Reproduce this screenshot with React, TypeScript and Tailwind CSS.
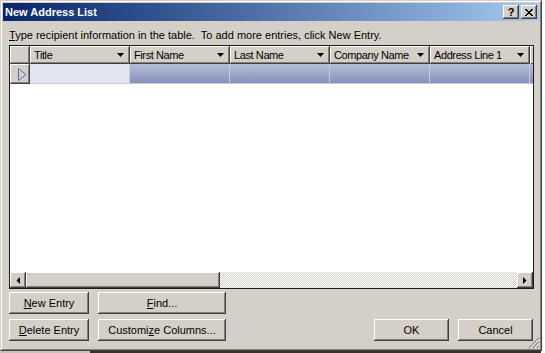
import React from "react";

function Arrow() {
  return (
    <svg width="7" height="4" viewBox="0 0 7 4" className="shrink-0">
      <path d="M0 0H7L3.5 4Z" fill="#000" />
    </svg>
  );
}

function HeaderCell({ label }: { label: string }) {
  return (
    <div className="w-[100px] h-full shrink-0 flex items-center justify-between pl-[4px] pr-[6px] bg-[#d4d0c8] shadow-[inset_-1px_-1px_#404040,inset_1px_1px_#ffffff,inset_-2px_-2px_#808080]">
      <span className="text-[11px] tracking-[-0.4px] text-black leading-none">{label}</span>
      <Arrow />
    </div>
  );
}

function Btn({ children, className }: { children: React.ReactNode; className: string }) {
  return (
    <div
      className={
        "h-[22px] flex items-center justify-center bg-[#d4d0c8] text-[11px] text-black leading-none shadow-[inset_-1px_-1px_#404040,inset_1px_1px_#ffffff,inset_-2px_-2px_#808080] " +
        className
      }
    >
      {children}
    </div>
  );
}

export default function App() {
  return (
    <div className="w-[545px] h-[353px] bg-white overflow-hidden font-['Liberation_Sans',Arial,sans-serif]">
      <div className="w-[542px] h-[351px] border border-t-[#d4d0c8] border-l-[#d4d0c8] border-r-[#404040] border-b-[#404040] bg-[#d4d0c8]">
        <div className="w-full h-full border border-t-white border-l-white border-r-[#808080] border-b-[#808080] p-[1px] flex flex-col relative">
          {/* Title bar */}
          <div className="h-[18px] shrink-0 flex items-center justify-between bg-linear-to-r from-[#0a246a] to-[#a6caf0] pl-[2px] pr-[2px]">
            <span className="text-[11px] font-bold text-white leading-none">New Address List</span>
            <div className="flex items-center">
              <div className="w-[16px] h-[14px] flex items-center justify-center bg-[#d4d0c8] shadow-[inset_-1px_-1px_#404040,inset_1px_1px_#ffffff,inset_-2px_-2px_#808080] text-[11px] font-bold text-black leading-none">
                ?
              </div>
              <div className="w-[16px] h-[14px] ml-[2px] flex items-center justify-center bg-[#d4d0c8] shadow-[inset_-1px_-1px_#404040,inset_1px_1px_#ffffff,inset_-2px_-2px_#808080]">
                <svg width="8" height="7" viewBox="0 0 8 7">
                  <path d="M0 0L7 7M1 0L8 7M7 0L0 7M8 0L1 7" stroke="#000" strokeWidth="1" />
                </svg>
              </div>
            </div>
          </div>

          {/* Content */}
          <div className="flex flex-col pl-[6px] pr-[6px]">
            <div className="mt-[8px] h-[13px] text-[11px] leading-[13px] text-black whitespace-pre">
              <span className="underline">T</span>ype recipient information in the table.  To add more entries, click New Entry.
            </div>

            {/* Table */}
            <div className="mt-[3px] w-[525px] h-[244px] border border-[#1c1c1c] bg-white flex flex-col">
              {/* Header */}
              <div className="h-[18px] flex shrink-0">
                <div className="w-[20px] h-full shrink-0 bg-[#d4d0c8] shadow-[inset_-1px_-1px_#404040,inset_1px_1px_#ffffff,inset_-2px_-2px_#808080]" />
                <HeaderCell label="Title" />
                <HeaderCell label="First Name" />
                <HeaderCell label="Last Name" />
                <HeaderCell label="Company Name" />
                <HeaderCell label="Address Line 1" />
                <div className="flex-1 h-full bg-[#d4d0c8] shadow-[inset_1px_1px_#ffffff,inset_0_-1px_#404040]" />
              </div>
              {/* Row */}
              <div className="h-[20px] flex shrink-0">
                <div className="w-[20px] h-full shrink-0 flex items-center justify-center bg-[#d4d0c8] shadow-[inset_-1px_-1px_#404040,inset_1px_1px_#ffffff,inset_-2px_-2px_#808080]">
                  <svg width="9" height="13" viewBox="0 0 9 13" className="ml-[4px]">
                    <path d="M0.5 0.5L8 6.5L0.5 12.5Z" fill="none" stroke="#5b6db0" strokeWidth="1" />
                  </svg>
                </div>
                <div className="w-[100px] h-full shrink-0 bg-[#e1e5ef] border-r border-b border-[#c8ccd8]" />
                <div className="w-[100px] h-full shrink-0 bg-linear-to-b from-[#b6bed7] to-[#8590b9] border-r border-b border-[#c6cad6]" />
                <div className="w-[100px] h-full shrink-0 bg-linear-to-b from-[#b6bed7] to-[#8590b9] border-r border-b border-[#c6cad6]" />
                <div className="w-[100px] h-full shrink-0 bg-linear-to-b from-[#b6bed7] to-[#8590b9] border-r border-b border-[#c6cad6]" />
                <div className="w-[100px] h-full shrink-0 bg-linear-to-b from-[#b6bed7] to-[#8590b9] border-r border-b border-[#c6cad6]" />
                <div className="flex-1 h-full bg-linear-to-b from-[#b6bed7] to-[#8590b9] border-b border-[#c6cad6]" />
              </div>
              <div className="flex-1" />
              {/* Scrollbar */}
              <div className="h-[16px] flex shrink-0">
                <div className="w-[16px] h-full shrink-0 flex items-center justify-center bg-[#d4d0c8] shadow-[inset_-1px_-1px_#404040,inset_1px_1px_#ffffff,inset_-2px_-2px_#808080]">
                  <svg width="4" height="7" viewBox="0 0 4 7">
                    <path d="M4 0V7L0.5 3.5Z" fill="#000" />
                  </svg>
                </div>
                <div className="w-[194px] h-full shrink-0 bg-[#d4d0c8] shadow-[inset_-1px_-1px_#404040,inset_1px_1px_#ffffff,inset_-2px_-2px_#808080]" />
                <div className="flex-1 h-full bg-[image:repeating-conic-gradient(#d4d0c8_0%_25%,#ffffff_0%_50%)] bg-[length:2px_2px]" />
                <div className="w-[16px] h-full shrink-0 flex items-center justify-center bg-[#d4d0c8] shadow-[inset_-1px_-1px_#404040,inset_1px_1px_#ffffff,inset_-2px_-2px_#808080]">
                  <svg width="4" height="7" viewBox="0 0 4 7">
                    <path d="M0 0V7L3.5 3.5Z" fill="#000" />
                  </svg>
                </div>
              </div>
            </div>

            {/* Buttons */}
            <div className="mt-[3px] flex gap-[9px]">
              <Btn className="w-[80px]">
                <span>
                  <span className="underline">N</span>ew Entry
                </span>
              </Btn>
              <Btn className="w-[128px]">
                <span>
                  <span className="underline">F</span>ind...
                </span>
              </Btn>
            </div>
            <div className="mt-[5px] flex gap-[9px]">
              <Btn className="w-[80px]">
                <span>
                  <span className="underline">D</span>elete Entry
                </span>
              </Btn>
              <Btn className="w-[128px]">
                <span>
                  Customi<span className="underline">z</span>e Columns...
                </span>
              </Btn>
              <div className="flex-1" />
              <Btn className="w-[75px]">OK</Btn>
              <Btn className="w-[75px]">Cancel</Btn>
            </div>
          </div>

          {/* Size grip */}
          <svg width="12" height="12" viewBox="0 0 12 12" className="absolute right-[0px] bottom-[0px]">
            <path d="M11 1L1 11M11 5L5 11M11 9L9 11" stroke="#808080" strokeWidth="1.2" />
            <path d="M11 2L2 11M11 6L6 11M11 10L10 11" stroke="#ffffff" strokeWidth="0.8" />
          </svg>
        </div>
      </div>
      <div className="flex h-[2px]">
        <div className="w-[90px] bg-[#c8c4bc]" />
        <div className="w-[451px] bg-[#3a3228]" />
      </div>
    </div>
  );
}
